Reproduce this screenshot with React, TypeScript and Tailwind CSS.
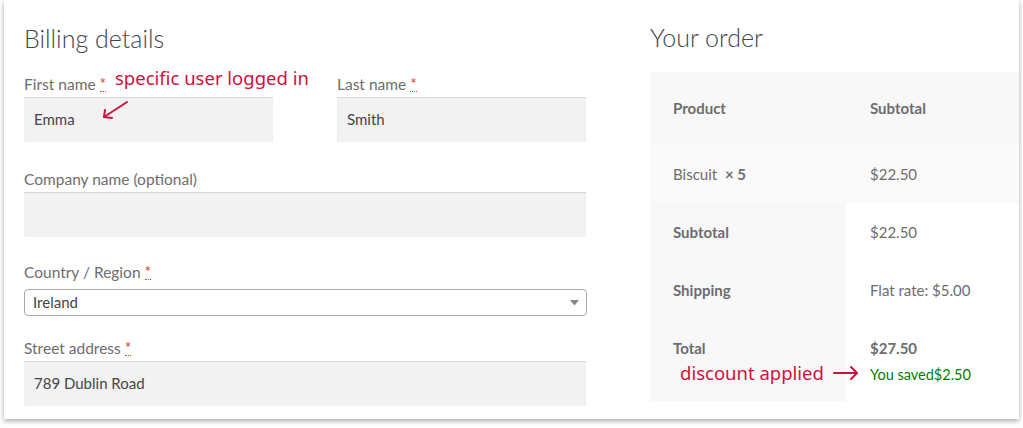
import React from "react";

const Req = () => (
  <abbr className="text-[#e2401c] no-underline border-b border-dotted border-[#e2401c] ml-1 leading-none" title="required">*</abbr>
);

function Label({ children, req }: { children: React.ReactNode; req?: boolean }) {
  return (
    <div className="text-[15.5px] text-[#6d6d6d] leading-[22px] h-[22px] flex items-center whitespace-nowrap">
      <span>{children}</span>
      {req && <Req />}
    </div>
  );
}

function Input({ value }: { value?: string }) {
  return (
    <div className="h-[45px] bg-[#f2f2f2] shadow-[inset_0_1px_1px_rgba(0,0,0,0.125)] flex items-center px-[10px] text-[15px] text-[#43454b]">
      {value}
    </div>
  );
}

export default function App() {
  return (
    <div className="w-[1023px] h-[428px] bg-white overflow-hidden" style={{ fontFamily: "Lato, 'Noto Sans', sans-serif" }}>
      <div className="ml-[4px] w-[1015px] h-[419px] bg-white shadow-[0_2px_5px_rgba(0,0,0,0.35)] flex">
        {/* Billing */}
        <div className="pl-[20px] w-[582px] shrink-0">
          <h3 className="mt-[22px] text-[25px] font-light text-[#43454b] leading-[32px] h-[32px]">Billing details</h3>
          <div className="flex gap-[64px] mt-[19px]">
            <div className="w-[249px] relative">
              <Label req>First name</Label>
              <span className="absolute left-[91px] top-[-7px] whitespace-nowrap text-[18.5px] text-[#d2103e] leading-[24px]" style={{ fontFamily: "'Noto Sans', sans-serif" }}>specific user logged in</span>
              <div className="mt-[2px] relative">
                <Input value="Emma" />
                <svg className="absolute left-[77px] top-[3px]" width="28" height="20" viewBox="0 0 28 20" fill="none" stroke="#d2103e" strokeWidth="2" strokeLinecap="round" strokeLinejoin="round">
                  <path d="M26 2 L3 17" />
                  <path d="M4 10 L3 17 L11 18" />
                </svg>
              </div>
            </div>
            <div className="w-[249px]">
              <Label req>Last name</Label>
              <div className="mt-[2px]">
                <Input value="Smith" />
              </div>
            </div>
          </div>
          <div className="mt-[26px]">
            <Label>Company name (optional)</Label>
            <div className="mt-[2px] w-[562px]">
              <Input />
            </div>
          </div>
          <div className="mt-[24px]">
            <Label req>Country / Region</Label>
            <div className="mt-[6px] w-[563px] h-[27px] border border-[#aaa] rounded-[4px] flex items-center justify-between pl-[8px] pr-[7px] text-[15px] text-[#43454b]">
              <span>Ireland</span>
              <svg width="9" height="6" viewBox="0 0 9 6"><path d="M0 0 L9 0 L4.5 5.5 Z" fill="#888" /></svg>
            </div>
          </div>
          <div className="mt-[21px]">
            <Label req>Street address</Label>
            <div className="mt-[2px] w-[562px]">
              <Input value="789 Dublin Road" />
            </div>
          </div>
        </div>
        {/* Order */}
        <div className="ml-[64px] flex-1">
          <h3 className="mt-[21px] text-[25px] font-light text-[#43454b] leading-[32px] h-[32px]">Your order</h3>
          <div className="mt-[19px] text-[15px] text-[#6d6d6d]">
            <div className="flex h-[73px] items-center bg-[#f8f8f8] font-bold">
              <div className="w-[196px] pl-[23px]">Product</div>
              <div className="pl-[24px]">Subtotal</div>
            </div>
            <div className="flex h-[58px] items-center bg-[#fafafa]">
              <div className="w-[196px] pl-[23px]">Biscuit <span className="font-bold ml-[4px]">× 5</span></div>
              <div className="pl-[24px]">$22.50</div>
            </div>
            <div className="flex">
              <div className="w-[196px] bg-[#f8f8f8] font-bold">
                <div className="h-[58px] flex items-center pl-[23px]">Subtotal</div>
                <div className="h-[58px] flex items-center pl-[23px]">Shipping</div>
                <div className="h-[82px] pl-[23px] pt-[18px]">Total</div>
              </div>
              <div className="flex-1 bg-white">
                <div className="h-[58px] flex items-center pl-[24px]">$22.50</div>
                <div className="h-[58px] flex items-center pl-[24px]">Flat rate: $5.00</div>
                <div className="h-[82px] pl-[24px] pt-[18px] relative">
                  <div className="font-bold">$27.50</div>
                  <div className="text-[#008000] text-[14.5px] mt-[4px]">You saved$2.50</div>
                  <div className="absolute left-[-166px] top-[42px] flex items-center gap-[9px] whitespace-nowrap">
                    <span className="text-[18.5px] text-[#d2103e] leading-[24px]" style={{ fontFamily: "'Noto Sans', sans-serif" }}>discount applied</span>
                    <svg width="26" height="14" viewBox="0 0 26 14" fill="none" stroke="#d2103e" strokeWidth="2" strokeLinecap="round" strokeLinejoin="round">
                      <path d="M1 7 L24 7" />
                      <path d="M18 1 L24 7 L18 13" />
                    </svg>
                  </div>
                </div>
              </div>
            </div>
          </div>
        </div>
      </div>
    </div>
  );
}
